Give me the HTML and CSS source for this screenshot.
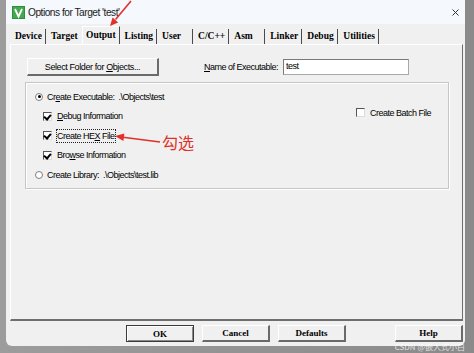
FILE: index.html
```html
<!DOCTYPE html>
<html lang="en">
<head>
    <meta charset="UTF-8">
    <title>Options for Target 'test'</title>
    <link rel="stylesheet" href="styles.css">
</head>
<body>
    <div class="screen">
        <div class="window">
            <div class="titlebar">
                <svg class="app-icon" viewBox="0 0 13 13">
                    <rect x="0" y="0" width="13" height="13" fill="#2f8f3a"/>
                    <rect x="1" y="1" width="11" height="11" fill="#43a94c"/>
                    <path d="M3 3 L6.5 10.5 L10 3" fill="none" stroke="#fff" stroke-width="1.8"/>
                </svg>
                <span class="title">Options for Target 'test'</span>
                <svg class="close" viewBox="0 0 7 7">
                    <path d="M0.5 0.5 L6.5 6.5 M6.5 0.5 L0.5 6.5" stroke="#333" stroke-width="1"/>
                </svg>
            </div>

            <div class="tabs">
                <span class="tab">Device</span>
                <span class="tab tab-prev">Target</span>
                <span class="tab tab-active">Output</span>
                <span class="tab">Listing</span>
                <span class="tab">User</span>
                <span class="tab">C/C++</span>
                <span class="tab">Asm</span>
                <span class="tab">Linker</span>
                <span class="tab">Debug</span>
                <span class="tab">Utilities</span>
            </div>

            <div class="panel">
                <div class="row-top">
                    <button class="btn btn-folder">Select Folder for <u>O</u>bjects...</button>
                    <span class="exe-label"><u>N</u>ame of Executable:</span>
                    <span class="textbox">test</span>
                </div>

                <div class="group">
                    <div class="group-left">
                        <div class="option">
                            <span class="radio checked"></span>
                            <span>Cr<u>e</u>ate Executable:&nbsp; .\Objects\test</span>
                        </div>
                        <div class="option sub">
                            <span class="check checked"></span>
                            <span><u>D</u>ebug Information</span>
                        </div>
                        <div class="option sub">
                            <span class="check checked"></span>
                            <span class="focus">Create HE<u>X</u> File</span>
                        </div>
                        <div class="option sub">
                            <span class="check checked"></span>
                            <span>Bro<u>w</u>se Information</span>
                        </div>
                        <div class="option">
                            <span class="radio"></span>
                            <span>Create Library:&nbsp; .\Objects\test.lib</span>
                        </div>
                    </div>
                    <div class="group-right">
                        <div class="option">
                            <span class="check"></span>
                            <span>Create Batch File</span>
                        </div>
                    </div>
                </div>
            </div>

            <div class="footer">
                <button class="btn btn-dlg btn-default">OK</button>
                <button class="btn btn-dlg">Cancel</button>
                <button class="btn btn-dlg">Defaults</button>
                <button class="btn btn-dlg btn-help">Help</button>
            </div>
        </div>

        <!-- red annotation marks over the dialog -->
        <svg class="marks" viewBox="0 0 474 353">
            <line x1="131" y1="1" x2="115.5" y2="19.5" stroke="#e0302a" stroke-width="1.6"/>
            <polygon points="110,26 118.2,22.4 112.6,17.4" fill="#e0302a"/>
            <line x1="160" y1="142" x2="123" y2="137.3" stroke="#e0302a" stroke-width="1.6"/>
            <polygon points="115,136 124.4,133.4 123.4,141" fill="#e0302a"/>
        </svg>
        <span class="note">勾选</span>
        <span class="watermark">CSDN @嵌入式小白</span>
    </div>
</body>
</html>
```

FILE: styles.css
```css
body {
    margin: 0;
    background-color: #8f8f8f;
    font-family: "Liberation Sans", Arial, sans-serif;
    font-size: 9px;
    letter-spacing: -0.5px;
    color: #000;
}

.screen {
    position: relative;
    width: 474px;
    height: 353px;
    overflow: hidden;
    background: linear-gradient(to right, #9c9c9c, #8a8a8a);
}

.window {
    margin-left: 6px;
    width: 459px;
    height: 346px;
    background-color: #f0f0f0;
    border-radius: 0 0 6px 6px;
    display: flex;
    flex-direction: column;
}

.titlebar {
    height: 24px;
    display: flex;
    align-items: center;
    padding: 0 6px;
    background-color: #f5f8fc;
}

.app-icon {
    width: 13px;
    height: 13px;
    margin-right: 3px;
}

.title {
    font-size: 10.2px;
    letter-spacing: -0.5px;
    color: #1b1b1b;
}

.close {
    margin-left: auto;
    width: 7px;
    height: 7px;
}

/* tab strip */
.tabs {
    display: flex;
    align-items: flex-end;
    height: 17px;
    margin-top: 3px;
    padding-left: 4px;
    font-family: "Liberation Serif", serif;
    font-weight: bold;
    font-size: 9.5px;
    letter-spacing: 0;
}

.tab {
    min-width: 27px;
    height: 15px;
    line-height: 15px;
    padding: 0 3px 0 5px;
    border-right: 1px solid #4a4a4a;
}

.tab-prev {
    border-right: none;
    padding-right: 4px;
}

.tab-active {
    height: 17px;
    line-height: 16px;
    border-top: 1px solid #fff;
    border-left: 1px solid #fff;
    padding-left: 3px;
}

.panel {
    box-sizing: border-box;
    height: 277px;
    margin: 0 2px 0 4px;
    padding: 13px 0 0 16px;
    border-top: 1px solid #fff;
    border-left: 1px solid #fff;
    border-right: 1px solid #6e6e6e;
    border-bottom: 2px solid #6e6e6e;
}

.row-top {
    display: flex;
    align-items: center;
    height: 18px;
}

.btn {
    box-sizing: border-box;
    height: 18px;
    padding: 0;
    font-family: inherit;
    font-size: 9px;
    letter-spacing: -0.4px;
    color: #000;
    background-color: #f0f0f0;
    border-top: 1px solid #fff;
    border-left: 1px solid #fff;
    border-right: 2px solid #6a6a6a;
    border-bottom: 2px solid #6a6a6a;
}

.btn-folder {
    width: 132px;
}

.exe-label {
    width: 79px;
    margin-left: 45px;
}

.textbox {
    box-sizing: border-box;
    width: 126px;
    height: 16px;
    padding-left: 2px;
    line-height: 13px;
    background-color: #fff;
    border: 1px solid #a8a8a8;
    border-top-color: #7a7a7a;
    border-left-color: #7a7a7a;
}

/* options group */
.group {
    box-sizing: border-box;
    display: flex;
    width: 424px;
    height: 107px;
    margin: 6px 0 0 -2px;
    border: 1px solid #c6c6c6;
    box-shadow: inset 1px 1px 0 #fff, 1px 1px 0 #fff;
}

.group-left {
    flex: 1;
    padding: 4px 0 0 9px;
}

.group-right {
    padding: 20px 17px 0 0;
}

.option {
    display: flex;
    align-items: center;
    height: 19.5px;
}

.option.sub {
    padding-left: 8px;
}

.radio {
    box-sizing: border-box;
    width: 8px;
    height: 8px;
    margin-right: 4px;
    border-radius: 50%;
    background-color: #fff;
    border: 1px solid #808080;
    display: flex;
    align-items: center;
    justify-content: center;
}

.radio.checked::after {
    content: "";
    width: 3px;
    height: 3px;
    border-radius: 50%;
    background-color: #000;
}

.check {
    box-sizing: border-box;
    position: relative;
    width: 9px;
    height: 9px;
    margin-right: 5px;
    background-color: #fff;
    border-top: 1px solid #555;
    border-left: 1px solid #555;
    border-right: 1px solid #dcdcdc;
    border-bottom: 1px solid #dcdcdc;
}

.check.checked::after {
    content: "";
    position: absolute;
    left: 1px;
    top: 0;
    width: 3px;
    height: 5px;
    border-right: 2px solid #000;
    border-bottom: 2px solid #000;
    transform: rotate(40deg);
}

.focus {
    padding: 1px 0;
    margin-left: -1px;
    border: 1px dotted #222;
}

.footer {
    display: flex;
    justify-content: flex-end;
    gap: 8px;
    padding: 4px 2px 0 0;
}

.btn-dlg {
    width: 68px;
    height: 17px;
    font-family: "Liberation Serif", serif;
    font-weight: bold;
    letter-spacing: 0;
}

.btn-default {
    border: 1px solid #3a3a3a;
    box-shadow: inset 1px 1px 0 #fff, inset -1px -1px 0 #8a8a8a;
}

.btn-help {
    margin-left: 41px;
}

/* annotations */
.marks {
    position: absolute;
    left: 0;
    top: 0;
    width: 474px;
    height: 353px;
    pointer-events: none;
}

.note {
    position: absolute;
    left: 162px;
    top: 132px;
    font-family: "Noto Sans CJK SC", sans-serif;
    font-size: 16px;
    line-height: 20px;
    letter-spacing: 0;
    color: #e0302a;
}

.watermark {
    position: absolute;
    right: 9px;
    bottom: 2px;
    font-family: "Noto Sans CJK SC", sans-serif;
    font-size: 8px;
    line-height: 9px;
    letter-spacing: 0;
    color: rgba(255, 255, 255, 0.75);
}
```
